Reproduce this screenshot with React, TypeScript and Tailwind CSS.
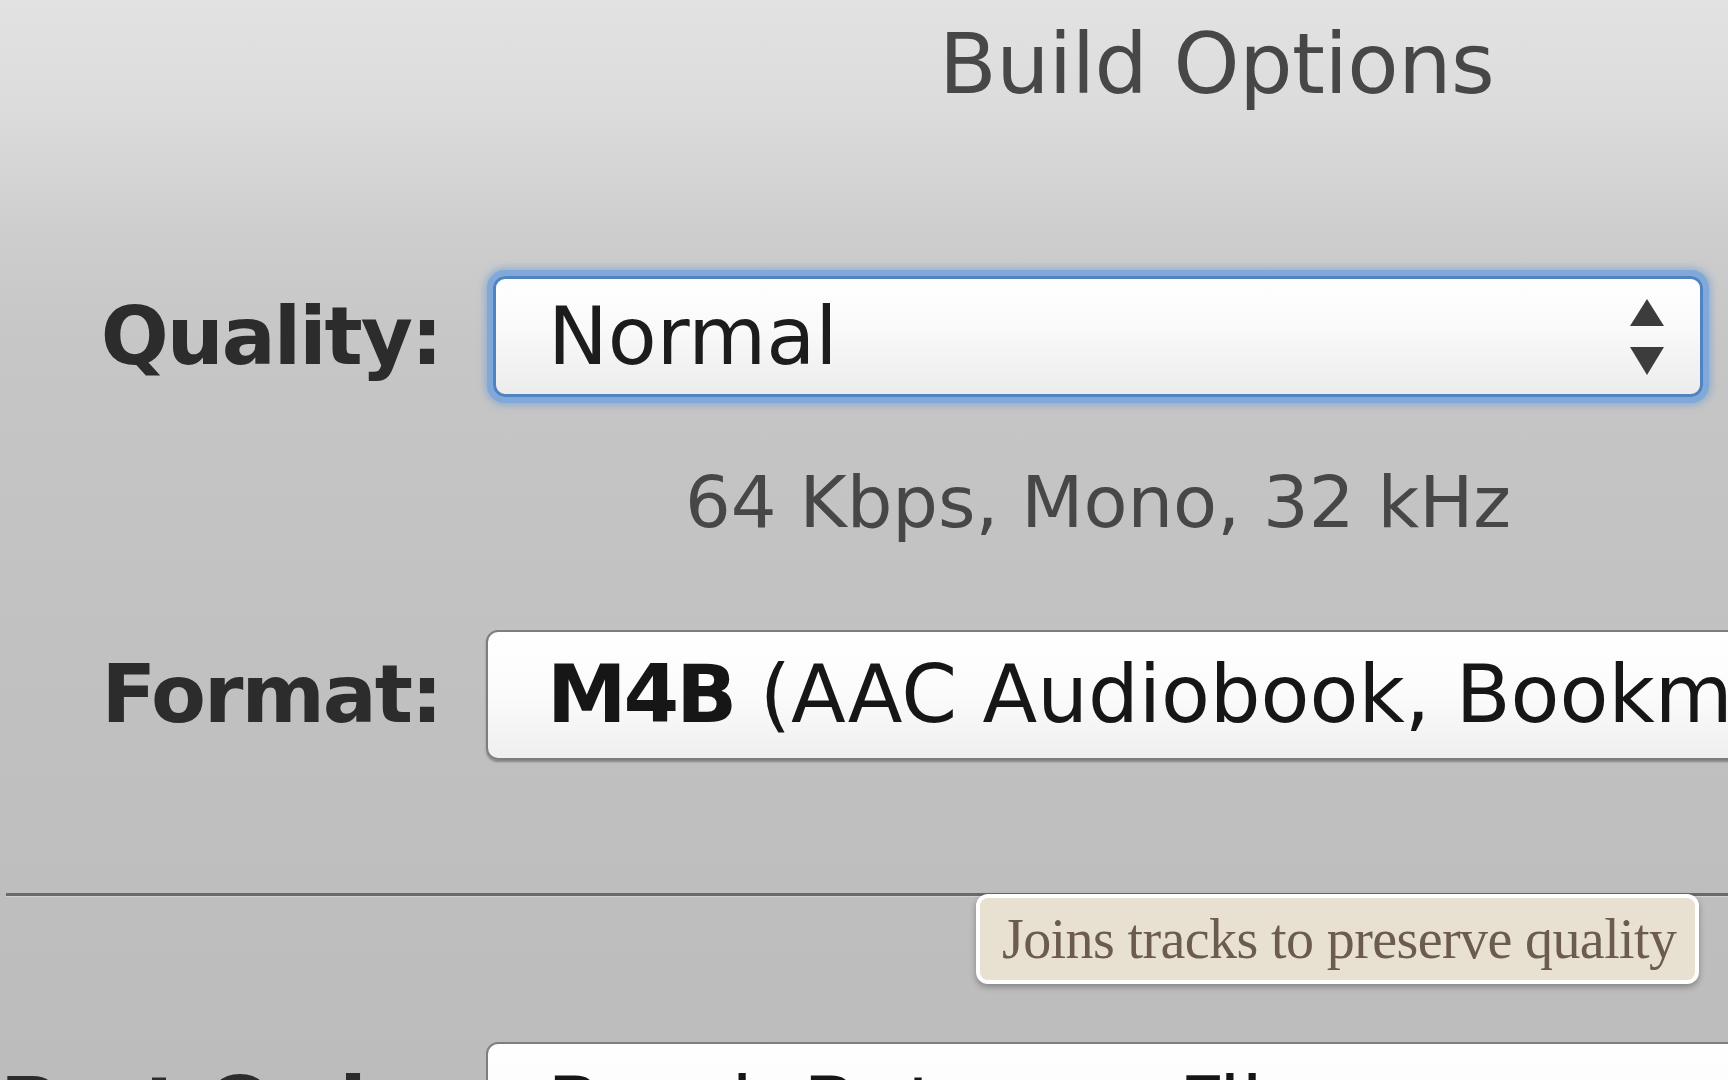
import React from "react";

const sans = "font-['DejaVu_Sans',sans-serif]";

function Arrows() {
  return (
    <svg width="34" height="76" viewBox="0 0 34 76" className="shrink-0">
      <polygon points="17,0 34,27 0,27" fill="#3c3c3c" />
      <polygon points="0,48 34,48 17,76" fill="#3c3c3c" />
    </svg>
  );
}

function Label({ children }: { children: React.ReactNode }) {
  return (
    <div className="w-[441px] shrink-0 text-right text-[80px] leading-none font-bold tracking-[-2px] text-[#2c2c2c] whitespace-nowrap">
      {children}
    </div>
  );
}

export default function App() {
  return (
    <div
      className={`${sans} relative w-[1728px] h-[1080px] overflow-hidden bg-[linear-gradient(to_bottom,#e2e2e2_0%,#dcdcdc_10%,#cdcdcd_22%,#c6c6c6_32%,#c1c1c1_60%,#bcbcbc_100%)]`}
    >
      {/* title */}
      <div className="pt-[22px] pl-[939px] text-[84px] leading-none tracking-[-0.5px] text-[#474747] whitespace-nowrap">
        Build Options
      </div>

      {/* quality */}
      <div className="mt-[170px] flex items-center">
        <Label>Quality:</Label>
        <div className="ml-[52px] w-[1210px] h-[121px] shrink-0 flex items-center justify-between pl-[52px] pr-[36px] rounded-[12px] border-[3px] border-[#4f83c2] bg-[linear-gradient(to_bottom,#ffffff_0%,#f9f9f9_45%,#ececec_100%)] outline-[6px] outline-solid outline-[#80a9da] shadow-[0_0_6px_9px_rgba(110,155,210,0.5)]">
          <span className="text-[80px] leading-none text-[#1c1c1c]">Normal</span>
          <Arrows />
        </div>
      </div>

      {/* bitrate */}
      <div className="mt-[69px] ml-[493px] w-[1210px] text-center text-[72px] leading-none text-[#474747] whitespace-nowrap">
        64 Kbps, Mono, 32 kHz
      </div>

      {/* format */}
      <div className="mt-[92px] flex items-center">
        <Label>Format:</Label>
        <div className="ml-[45px] w-[1300px] h-[130px] shrink-0 flex items-center pl-[59px] rounded-[12px] border-2 border-[#7e7e7e] bg-[linear-gradient(to_bottom,#ffffff_0%,#fbfbfb_50%,#efefef_100%)] shadow-[0_2px_2px_rgba(0,0,0,0.3)] overflow-hidden whitespace-nowrap">
          <span className="text-[80px] leading-none text-[#161616]">
            <span className="font-bold tracking-[-3px]">M4B</span> (AAC Audiobook, Bookmarkable)
          </span>
        </div>
      </div>

      {/* separator */}
      <div className="mt-[133px] ml-[6px] h-[3px] bg-[#6a6a6a] border-b border-[#d2d2d2] box-content" />

      {/* next row, cut by the window */}
      <div className="mt-[145px] flex items-center">
        <Label>Part Order:</Label>
        <div className="ml-[45px] w-[1300px] h-[130px] shrink-0 flex items-center pl-[59px] rounded-[12px] border-2 border-[#7e7e7e] bg-[linear-gradient(to_bottom,#ffffff_0%,#fbfbfb_50%,#efefef_100%)] overflow-hidden whitespace-nowrap">
          <span className="text-[80px] leading-none text-[#161616]">Break Between Files</span>
        </div>
      </div>

      {/* tooltip */}
      <div className="absolute left-[976px] top-[894px] w-[723px] h-[90px] flex items-center pl-[22px] rounded-[12px] border-[4px] border-white bg-[#e8e0d1] shadow-[0_3px_6px_rgba(0,0,0,0.3)] font-['Liberation_Serif',serif] text-[56px] leading-none tracking-[-0.6px] text-[#6b5c4d] whitespace-nowrap">
        Joins tracks to preserve quality
      </div>
    </div>
  );
}
